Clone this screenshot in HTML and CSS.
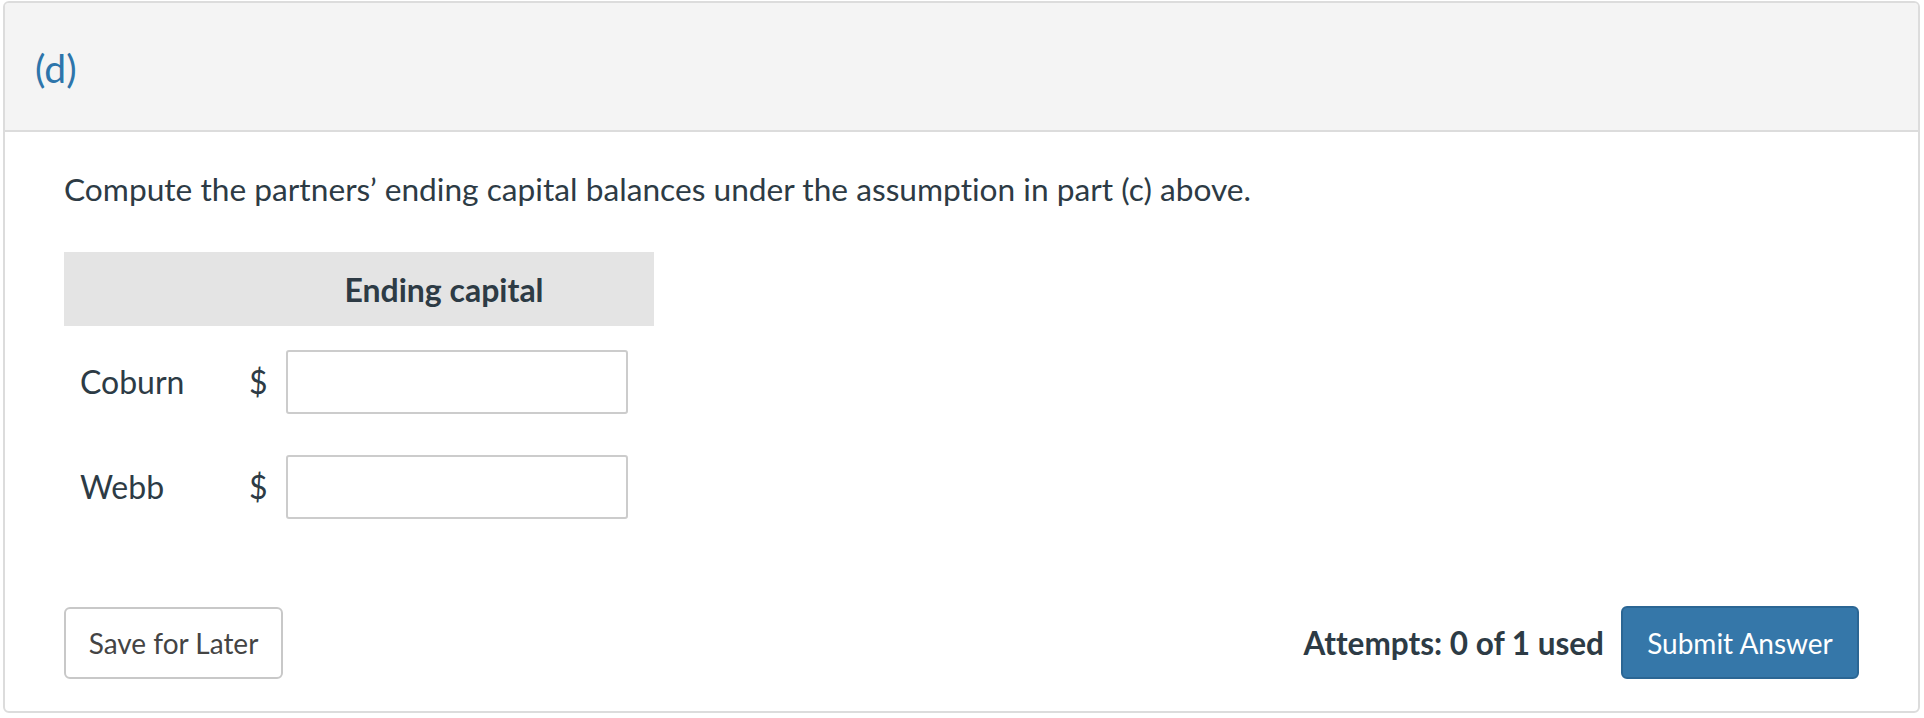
FILE: index.html
```html
<!DOCTYPE html>
<html lang="en">
<head>
<meta charset="utf-8">
<title>Question (d)</title>
<link rel="stylesheet" href="styles.css">
</head>
<body>
<section class="panel">
  <header class="panel-header">
    <h2 class="part-title">(d)</h2>
  </header>
  <div class="panel-body">
    <p class="prompt">Compute the partners’ ending capital balances under the assumption in part (c) above.</p>
    <div class="answer-grid">
      <div class="grid-head-blank"></div>
      <div class="grid-head">Ending capital</div>

      <div class="row-label">Coburn</div>
      <div class="currency">$</div>
      <div class="cell-input"><input class="answer-input" type="text" aria-label="Coburn ending capital"></div>
      <div class="cell-pad"></div>

      <div class="row-label">Webb</div>
      <div class="currency">$</div>
      <div class="cell-input"><input class="answer-input" type="text" aria-label="Webb ending capital"></div>
      <div class="cell-pad"></div>
    </div>
    <div class="actions">
      <button class="btn btn-secondary" type="button">Save for Later</button>
      <div class="actions-right">
        <span class="attempts">Attempts: 0 of 1 used</span>
        <button class="btn btn-primary" type="button">Submit Answer</button>
      </div>
    </div>
  </div>
</section>
</body>
</html>
```

FILE: styles.css
```css
* { box-sizing: border-box; }

html, body {
  margin: 0;
  padding: 0;
  background: #ffffff;
}

body {
  font-family: Lato, "Open Sans", "Liberation Sans", sans-serif;
  font-variant-ligatures: none;
  color: #2d3b45;
  padding: 1px 4px 5px 3px;
}

.panel {
  border: 2px solid #dcdcdc;
  border-radius: 6px;
  overflow: hidden;
  background: #ffffff;
}

.panel-header {
  background: #f4f4f4;
  border-bottom: 2px solid #dcdcdc;
  height: 129px;
  display: flex;
  align-items: center;
  padding-left: 30px;
}

.part-title {
  margin: 0;
  font-size: 39px;
  font-weight: 400;
  color: #2d75ab;
  line-height: 1;
  padding-top: 3px;
}

.panel-body {
  padding: 0 59px 32px 59px;
}

.prompt {
  margin: 36px 0 0 0;
  font-size: 31.7px;
  line-height: 42px;
}

.answer-grid {
  margin-top: 42px;
  width: 590px;
  display: grid;
  grid-template-columns: 176px 46px 342px 26px;
  grid-template-rows: 74px 105px 105px;
  align-items: center;
  font-size: 32px;
}

.grid-head-blank,
.grid-head {
  background: #e4e4e4;
  height: 100%;
  display: flex;
  align-items: center;
}

.grid-head {
  grid-column: 2 / 5;
  justify-content: center;
  font-weight: 700;
  padding-right: 6px;
}

.row-label {
  padding-left: 16px;
  padding-top: 6px;
}

.currency {
  padding-left: 9px;
  padding-top: 6px;
}

.cell-input {
  padding-top: 6px;
}

.answer-input {
  display: block;
  width: 342px;
  height: 64px;
  border: 2px solid #cccccc;
  border-radius: 3px;
  background: #ffffff;
  font: inherit;
  padding: 0 10px;
}

.actions {
  margin-top: 70px;
  display: flex;
  justify-content: space-between;
  align-items: center;
}

.actions-right {
  display: flex;
  align-items: center;
  gap: 17px;
}

.attempts {
  font-size: 31.5px;
  font-weight: 700;
  color: #2d3b45;
}

.btn {
  font-family: Lato, "Open Sans", "Liberation Sans", sans-serif;
  font-size: 28px;
  border-radius: 6px;
  cursor: pointer;
  line-height: 1;
}

.btn-secondary {
  width: 219px;
  height: 72px;
  background: #ffffff;
  color: #444444;
  border: 2px solid #c8c8c8;
}

.btn-primary {
  width: 238px;
  height: 73px;
  background: #3577a9;
  color: #ffffff;
  border: 2px solid #2b6694;
}
```
